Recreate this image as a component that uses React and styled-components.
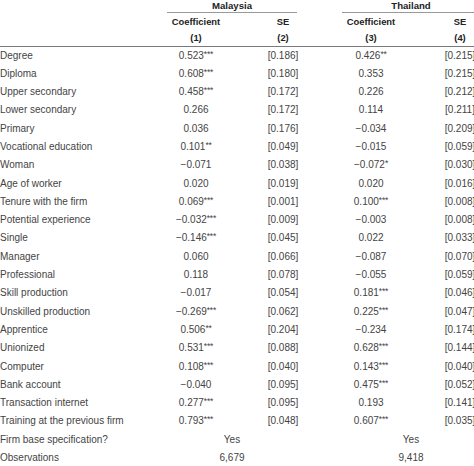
import React from 'react';
import styled, { createGlobalStyle } from 'styled-components';

const GlobalStyle = createGlobalStyle`
  html, body {
    margin: 0;
    padding: 0;
    background: #ffffff;
    overflow: hidden;
  }
  body {
    font-family: "Liberation Sans", Arial, sans-serif;
  }
`;

const Table = styled.div`
  display: grid;
  grid-template-columns: 152px 88px 86px 90px 88px;
  grid-template-rows: 13px 18px 15.5px;
  grid-auto-rows: 18.3px;
  width: 504px;
  font-size: 10px;
  color: #444444;
`;

const Cell = styled.div`
  text-align: ${(p) => (p.$left ? 'left' : 'center')};
  line-height: ${(p) => p.$lh || '18.3px'};
  white-space: nowrap;
`;

const GroupHead = styled.div`
  grid-column: span 2;
  margin: ${(p) => p.$margin};
  border-bottom: 1px solid #9a9a9a;
  text-align: center;
  font-weight: bold;
  font-size: 9.6px;
  color: #222;
  line-height: 11px;
`;

const ColHead = styled(Cell)`
  font-weight: bold;
  font-size: 9.4px;
  color: #222;
`;

const NumHead = styled(ColHead)`
  border-bottom: 1.5px solid #7a7a7a;
  line-height: 13px;
`;

const Span2 = styled(Cell)`
  grid-column: span 2;
  margin: ${(p) => p.$margin};
`;

const Stars = styled.span`
  font-size: 8.5px;
  line-height: 1;
  vertical-align: 2px;
  letter-spacing: -0.2px;
`;

const rows = [
  ['Degree', '0.523***', '[0.186]', '0.426**', '[0.215]'],
  ['Diploma', '0.608***', '[0.180]', '0.353', '[0.215]'],
  ['Upper secondary', '0.458***', '[0.172]', '0.226', '[0.212]'],
  ['Lower secondary', '0.266', '[0.172]', '0.114', '[0.211]'],
  ['Primary', '0.036', '[0.176]', '−0.034', '[0.209]'],
  ['Vocational education', '0.101**', '[0.049]', '−0.015', '[0.059]'],
  ['Woman', '−0.071', '[0.038]', '−0.072*', '[0.030]'],
  ['Age of worker', '0.020', '[0.019]', '0.020', '[0.016]'],
  ['Tenure with the firm', '0.069***', '[0.001]', '0.100***', '[0.008]'],
  ['Potential experience', '−0.032***', '[0.009]', '−0.003', '[0.008]'],
  ['Single', '−0.146***', '[0.045]', '0.022', '[0.033]'],
  ['Manager', '0.060', '[0.066]', '−0.087', '[0.070]'],
  ['Professional', '0.118', '[0.078]', '−0.055', '[0.059]'],
  ['Skill production', '−0.017', '[0.054]', '0.181***', '[0.046]'],
  ['Unskilled production', '−0.269***', '[0.062]', '0.225***', '[0.047]'],
  ['Apprentice', '0.506**', '[0.204]', '−0.234', '[0.174]'],
  ['Unionized', '0.531***', '[0.088]', '0.628***', '[0.144]'],
  ['Computer', '0.108***', '[0.040]', '0.143***', '[0.040]'],
  ['Bank account', '−0.040', '[0.095]', '0.475***', '[0.052]'],
  ['Transaction internet', '0.277***', '[0.095]', '0.193', '[0.141]'],
  ['Training at the previous firm', '0.793***', '[0.048]', '0.607***', '[0.035]'],
];

const Value = ({ text }) => {
  const m = text.match(/^(.*?)(\*+)$/);
  if (!m) return <Cell>{text}</Cell>;
  return (
    <Cell>
      {m[1]}
      <Stars>{m[2]}</Stars>
    </Cell>
  );
};

const MY = '0 29px 0 15px';
const TH = '0 24px 0 16px';

export default function App() {
  return (
    <>
      <GlobalStyle />
      <Table>
        <Cell />
        <GroupHead $margin={MY}>Malaysia</GroupHead>
        <GroupHead $margin={TH}>Thailand</GroupHead>

        <Cell />
        <ColHead $lh="18px">Coefficient</ColHead>
        <ColHead $lh="18px">SE</ColHead>
        <ColHead $lh="18px">Coefficient</ColHead>
        <ColHead $lh="18px">SE</ColHead>

        <NumHead />
        <NumHead>(1)</NumHead>
        <NumHead>(2)</NumHead>
        <NumHead>(3)</NumHead>
        <NumHead>(4)</NumHead>

        {rows.map((r) => (
          <React.Fragment key={r[0]}>
            <Cell $left>{r[0]}</Cell>
            {r.slice(1).map((v, i) => (
              <Value key={i} text={v} />
            ))}
          </React.Fragment>
        ))}

        <Cell $left>Firm base specification?</Cell>
        <Span2 $margin={MY}>Yes</Span2>
        <Span2 $margin={TH}>Yes</Span2>

        <Cell $left>Observations</Cell>
        <Span2 $margin={MY}>6,679</Span2>
        <Span2 $margin={TH}>9,418</Span2>
      </Table>
    </>
  );
}
